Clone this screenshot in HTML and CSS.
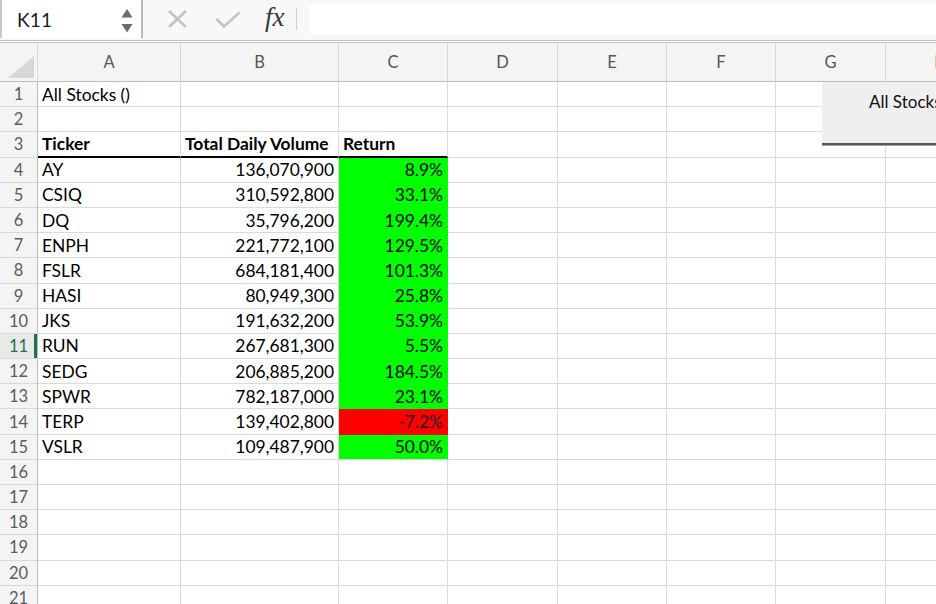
FILE: index.html
```html
<!DOCTYPE html>
<html lang="en">
<head>
<meta charset="utf-8">
<title>Stocks</title>
<link rel="stylesheet" href="styles.css">
</head>
<body>
<div class="app">
  <div class="toolbar">
    <div class="namebox">
      <span class="ref">K11</span>
      <svg class="spin" width="12" height="26" viewBox="0 0 12 26"><polygon points="6,1 11.5,9.5 0.5,9.5" fill="#6b6b6b"/><polygon points="0.5,16 11.5,16 6,24.5" fill="#6b6b6b"/></svg>
    </div>
    <div class="fbtns">
      <svg class="ico-x" width="22" height="18" viewBox="0 0 22 18"><path d="M2 1 L19 17 M19 1 L2 17" stroke="#c3c3c3" stroke-width="2.6" fill="none"/></svg>
      <svg class="ico-ok" width="26" height="18" viewBox="0 0 26 18"><path d="M1.5 8 L9 15.5 L24.5 1.5" stroke="#c3c3c3" stroke-width="2.6" fill="none"/></svg>
      <span class="fx">fx</span>
      <span class="vsep"></span>
    </div>
    <div class="finput"></div>
  </div>
  <div class="sheet">
    <div class="grid">
      <div class="corner"><span class="tri"></span></div>
      <div class="colh">A</div><div class="colh">B</div><div class="colh">C</div><div class="colh">D</div><div class="colh">E</div><div class="colh">F</div><div class="colh">G</div><div class="colh">H</div>

      <div class="rowh">1</div><div class="c">All Stocks ()</div><div class="c"></div><div class="c"></div><div class="c"></div><div class="c"></div><div class="c"></div><div class="c"></div><div class="c"></div>
      <div class="rowh">2</div><div class="c"></div><div class="c"></div><div class="c"></div><div class="c"></div><div class="c"></div><div class="c"></div><div class="c"></div><div class="c"></div>
      <div class="rowh">3</div><div class="c b thick">Ticker</div><div class="c b thick">Total Daily Volume</div><div class="c b thick">Return</div><div class="c"></div><div class="c"></div><div class="c"></div><div class="c"></div><div class="c"></div>
      <div class="rowh">4</div><div class="c">AY</div><div class="c r">136,070,900</div><div class="c r g">8.9%</div><div class="c"></div><div class="c"></div><div class="c"></div><div class="c"></div><div class="c"></div>
      <div class="rowh">5</div><div class="c">CSIQ</div><div class="c r">310,592,800</div><div class="c r g">33.1%</div><div class="c"></div><div class="c"></div><div class="c"></div><div class="c"></div><div class="c"></div>
      <div class="rowh">6</div><div class="c">DQ</div><div class="c r">35,796,200</div><div class="c r g">199.4%</div><div class="c"></div><div class="c"></div><div class="c"></div><div class="c"></div><div class="c"></div>
      <div class="rowh">7</div><div class="c">ENPH</div><div class="c r">221,772,100</div><div class="c r g">129.5%</div><div class="c"></div><div class="c"></div><div class="c"></div><div class="c"></div><div class="c"></div>
      <div class="rowh">8</div><div class="c">FSLR</div><div class="c r">684,181,400</div><div class="c r g">101.3%</div><div class="c"></div><div class="c"></div><div class="c"></div><div class="c"></div><div class="c"></div>
      <div class="rowh">9</div><div class="c">HASI</div><div class="c r">80,949,300</div><div class="c r g">25.8%</div><div class="c"></div><div class="c"></div><div class="c"></div><div class="c"></div><div class="c"></div>
      <div class="rowh">10</div><div class="c">JKS</div><div class="c r">191,632,200</div><div class="c r g">53.9%</div><div class="c"></div><div class="c"></div><div class="c"></div><div class="c"></div><div class="c"></div>
      <div class="rowh sel">11</div><div class="c">RUN</div><div class="c r">267,681,300</div><div class="c r g">5.5%</div><div class="c"></div><div class="c"></div><div class="c"></div><div class="c"></div><div class="c"></div>
      <div class="rowh">12</div><div class="c">SEDG</div><div class="c r">206,885,200</div><div class="c r g">184.5%</div><div class="c"></div><div class="c"></div><div class="c"></div><div class="c"></div><div class="c"></div>
      <div class="rowh">13</div><div class="c">SPWR</div><div class="c r">782,187,000</div><div class="c r g">23.1%</div><div class="c"></div><div class="c"></div><div class="c"></div><div class="c"></div><div class="c"></div>
      <div class="rowh">14</div><div class="c">TERP</div><div class="c r">139,402,800</div><div class="c r red">-7.2%</div><div class="c"></div><div class="c"></div><div class="c"></div><div class="c"></div><div class="c"></div>
      <div class="rowh">15</div><div class="c">VSLR</div><div class="c r">109,487,900</div><div class="c r g last">50.0%</div><div class="c"></div><div class="c"></div><div class="c"></div><div class="c"></div><div class="c"></div>
      <div class="rowh">16</div><div class="c"></div><div class="c"></div><div class="c"></div><div class="c"></div><div class="c"></div><div class="c"></div><div class="c"></div><div class="c"></div>
      <div class="rowh">17</div><div class="c"></div><div class="c"></div><div class="c"></div><div class="c"></div><div class="c"></div><div class="c"></div><div class="c"></div><div class="c"></div>
      <div class="rowh">18</div><div class="c"></div><div class="c"></div><div class="c"></div><div class="c"></div><div class="c"></div><div class="c"></div><div class="c"></div><div class="c"></div>
      <div class="rowh">19</div><div class="c"></div><div class="c"></div><div class="c"></div><div class="c"></div><div class="c"></div><div class="c"></div><div class="c"></div><div class="c"></div>
      <div class="rowh">20</div><div class="c"></div><div class="c"></div><div class="c"></div><div class="c"></div><div class="c"></div><div class="c"></div><div class="c"></div><div class="c"></div>
      <div class="rowh">21</div><div class="c"></div><div class="c"></div><div class="c"></div><div class="c"></div><div class="c"></div><div class="c"></div><div class="c"></div><div class="c"></div>
    </div>
    <button class="macro-btn">All Stocks</button>
  </div>
</div>
</body>
</html>
```

FILE: styles.css
```css
html, body {
  margin: 0;
  padding: 0;
  background: #ffffff;
  overflow: hidden;
}

.app {
  width: 936px;
  height: 604px;
  overflow: hidden;
  font-family: Lato, "Noto Sans", sans-serif;
  color: #000;
}

/* ---------- formula bar ---------- */
.toolbar {
  height: 40px;
  box-sizing: content-box;
  border-bottom: 1px solid #c4c4c4;
  background: #f8f8f8;
  display: flex;
  align-items: flex-start;
}

.namebox {
  width: 143px;
  height: 38px;
  background: #ffffff;
  border-left: 2px solid #c9c9c9;
  border-right: 2px solid #b8b8b8;
  display: flex;
  align-items: center;
  justify-content: space-between;
  padding: 0 8px 0 15px;
  box-sizing: border-box;
}

.ref {
  font-size: 19px;
  color: #1a1a1a;
  letter-spacing: 0.2px;
}

.spin {
  display: block;
  margin-top: 3px;
}

.fbtns {
  display: flex;
  align-items: center;
  height: 38px;
  padding-left: 24px;
}

.ico-x { display: block; margin-right: 26px; }
.ico-ok { display: block; margin-right: 24px; margin-top: 1px; }

.fx {
  font-family: "Liberation Serif", "DejaVu Serif", serif;
  font-style: italic;
  font-size: 27px;
  color: #3a3a3a;
  line-height: 1;
  margin-top: -3px;
}

.vsep {
  width: 1px;
  height: 22px;
  background: #d0d0d0;
  margin-left: 11px;
}

.finput {
  flex: 1;
  margin: 4px 0 0 12px;
  height: 31px;
  background: #ffffff;
}

/* ---------- sheet ---------- */
.sheet {
  position: relative;
  margin-top: 1px;
  border-top: 1px solid #c8c8c8;
  height: 600px;
}

.grid {
  display: grid;
  grid-template-columns: 38px 143px 158px 109px 110px 109px 109px 110px 110px;
  grid-template-rows: 39px;
  grid-auto-rows: 25.2px;
  width: 996px;
}

.grid > div {
  box-sizing: border-box;
  border-right: 1px solid #dadada;
  border-bottom: 1px solid #dadada;
  white-space: nowrap;
  overflow: hidden;
  display: flex;
  align-items: center;
}

.corner {
  background: #f4f4f4;
  justify-content: flex-end;
  align-items: flex-end !important;
  padding: 0 3px 3px 0;
}

.grid > .corner,
.grid > .colh {
  border-bottom-color: #bdbdbd;
}

.tri {
  display: block;
  width: 26px;
  height: 22px;
  background: #d7d7d7;
  clip-path: polygon(100% 0, 100% 100%, 0 100%);
}

.colh {
  background: #f4f4f4;
  justify-content: center;
  font-size: 16.5px;
  color: #565656;
  border-right-color: #d6d6d6 !important;
}

.rowh {
  background: #f4f4f4;
  justify-content: center;
  font-size: 16.5px;
  color: #5c5c5c;
  border-right-color: #bcbcbc !important;
  border-bottom-color: #d8d8d8 !important;
}

.rowh.sel {
  background: #e9e9e9;
  color: #217346;
  box-shadow: inset -3px 0 0 #217346;
}

.c {
  font-size: 17.4px;
  padding: 0 4px;
}

.c.r {
  justify-content: flex-end;
}

.c.b {
  font-weight: 700;
}

.grid > .thick {
  border-bottom: 2px solid #000;
}

.grid > .g {
  background: #00ff00;
  border-right-color: #00ff00;
  border-bottom-color: #00ff00;
}

.grid > .g.last {
  border-bottom-color: #d6d6d6;
}

.grid > .red {
  background: #ff0000;
  border-right-color: #ff0000;
  border-bottom-color: #ff0000;
  color: #1a1a1a;
}

/* floating form button (macro) */
.macro-btn {
  position: absolute;
  left: 822px;
  top: 39px;
  width: 200px;
  height: 63px;
  margin: 0;
  padding: 9px 0 0 47px;
  box-sizing: border-box;
  text-align: left;
  display: flex;
  align-items: flex-start;
  background: #efefef;
  border: none;
  border-bottom: 2px solid #575757;
  box-shadow: 0 1px 0 #a0a0a0;
  font-family: Lato, "Noto Sans", sans-serif;
  font-size: 17px;
  color: #111;
}
```
